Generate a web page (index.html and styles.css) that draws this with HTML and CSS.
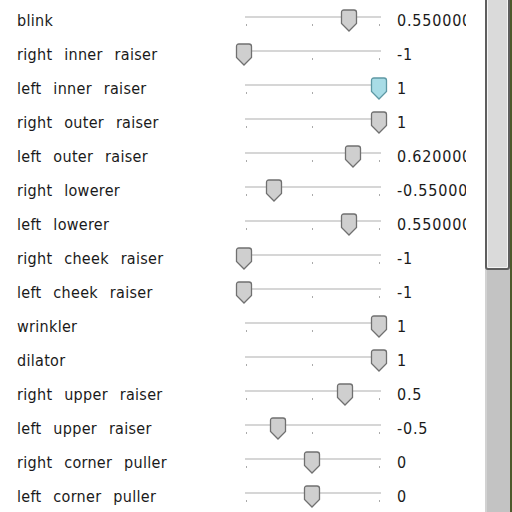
FILE: index.html
```html
<!DOCTYPE html>
<html lang="en">
<head>
  <meta charset="UTF-8">
  <title>Face Controls</title>
  <link rel="stylesheet" href="styles.css">
</head>
<body>

<div class="panel">
  <div class="list" id="list"></div>
  <div class="scrollbar">
    <div class="scroll-thumb"></div>
  </div>
  <div class="edge"></div>
</div>

<script>
  const controls = [
    ["blink", 0.55, "0.550000"],
    ["right inner raiser", -1, "-1"],
    ["left inner raiser", 1, "1", true],
    ["right outer raiser", 1, "1"],
    ["left outer raiser", 0.62, "0.620000"],
    ["right lowerer", -0.55, "-0.550000"],
    ["left lowerer", 0.55, "0.550000"],
    ["right cheek raiser", -1, "-1"],
    ["left cheek raiser", -1, "-1"],
    ["wrinkler", 1, "1"],
    ["dilator", 1, "1"],
    ["right upper raiser", 0.5, "0.5"],
    ["left upper raiser", -0.5, "-0.5"],
    ["right corner puller", 0, "0"],
    ["left corner puller", 0, "0"]
  ];

  const TRACK = 135;
  const thumbSvg = `
    <svg width="18" height="23" viewBox="0 0 18 23">
      <path d="M1.5 3.5 Q1.5 1 4 1 H14 Q16.5 1 16.5 3.5 V14.5 L9 22 L1.5 14.5 Z"/>
    </svg>`;

  const list = document.getElementById("list");
  controls.forEach(([name, value, text, active]) => {
    const row = document.createElement("div");
    row.className = "row";
    const left = Math.round((value + 1) / 2 * TRACK);
    row.innerHTML = `
      <div class="label">${name}</div>
      <div class="slider">
        <div class="track"></div>
        <div class="tick tick-a"></div>
        <div class="tick tick-b"></div>
        <div class="tick tick-c"></div>
        <div class="thumb${active ? " active" : ""}" style="left: ${left}px">${thumbSvg}</div>
      </div>
      <div class="value">${text}</div>
    `;
    list.appendChild(row);
  });
</script>

</body>
</html>
```

FILE: styles.css
```css
body {
  margin: 0;
  background: white;
  font-family: "DejaVu Sans Condensed", "DejaVu Sans", sans-serif;
  font-stretch: condensed;
  font-size: 16px;
  color: #1a1a1a;
  overflow: hidden;
}
.panel {
  display: flex;
  height: 512px;
}
.list {
  flex: 1;
  padding-top: 3px;
}
.row {
  display: flex;
  height: 34px;
  line-height: 35px;
  white-space: nowrap;
}
.label {
  width: 218px;
  padding-left: 17px;
  letter-spacing: 0.3px;
  word-spacing: 7px;
}
.slider {
  position: relative;
  width: 153px;
}
.track {
  position: absolute;
  left: 10px;
  top: 13px;
  width: 136px;
  height: 2px;
  background: #d6d6d6;
}
.tick {
  position: absolute;
  top: 21px;
  width: 1px;
  height: 2px;
  background: #aaa;
}
.tick-a { left: 11px; }
.tick-b { left: 77px; }
.tick-c { left: 144px; }
.thumb {
  position: absolute;
  top: 6px;
  width: 18px;
  height: 23px;
}
.thumb svg {
  display: block;
}
.thumb path {
  fill: #cfcfcf;
  stroke: #707070;
  stroke-width: 1.3;
}
.thumb.active path {
  fill: #a8dce6;
  stroke: #5d98a4;
}
/* long numbers run into the scrollbar and are cut */
.value {
  width: 69px;
  margin-left: 9px;
  overflow: hidden;
  letter-spacing: 0.8px;
}
.scrollbar {
  position: relative;
  width: 25px;
  background: #c3c3c3;
  border-left: 2px solid #d2d2d2;
  box-sizing: border-box;
}
.scroll-thumb {
  position: absolute;
  left: -2px;
  right: 0;
  top: -4px;
  height: 270px;
  background: #dadada;
  border: 2px solid #5e5e5e;
  border-radius: 3px;
  box-shadow: inset 1px 1px 0 #f4f4f4, inset -1px -1px 0 #f4f4f4;
}
.edge {
  width: 2px;
  background: #4d5a2c;
}
```
